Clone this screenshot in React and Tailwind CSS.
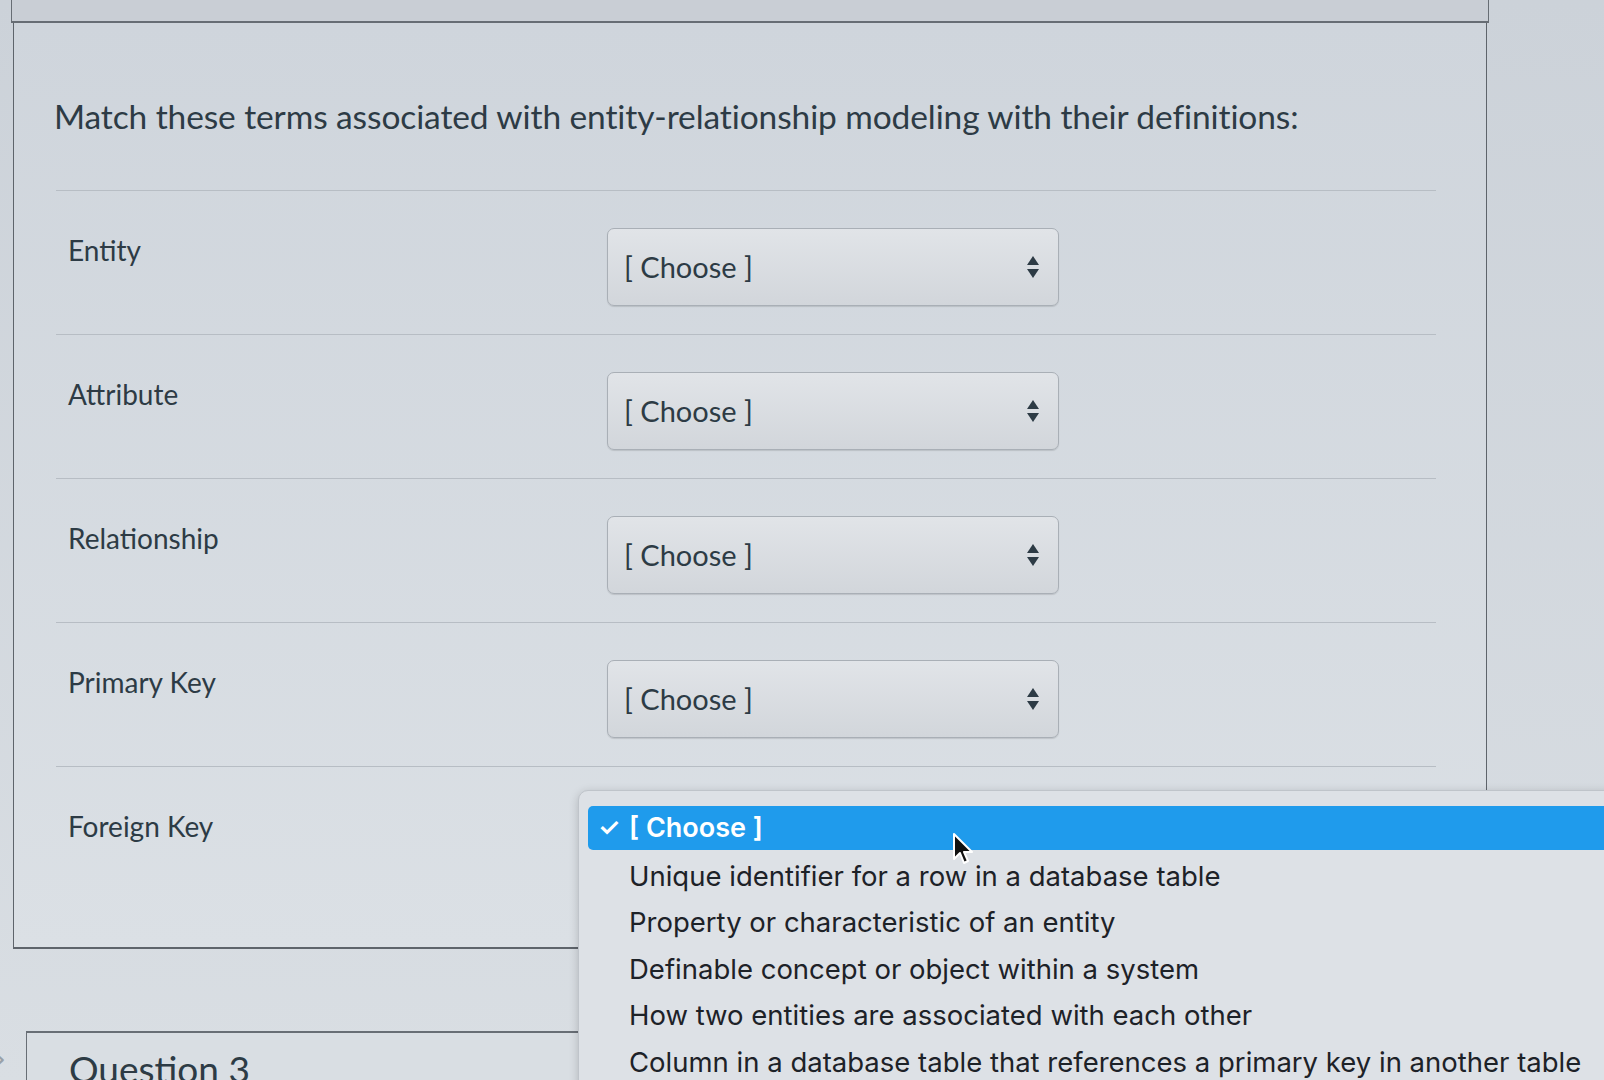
import React from 'react';

const TERMS = ['Entity', 'Attribute', 'Relationship', 'Primary Key', 'Foreign Key'];

const OPTIONS = [
  'Unique identifier for a row in a database table',
  'Property or characteristic of an entity',
  'Definable concept or object within a system',
  'How two entities are associated with each other',
  'Column in a database table that references a primary key in another table',
];

function Arrows() {
  return (
    <svg width="14" height="26" viewBox="0 0 14 26" className="shrink-0">
      <path d="M7 2 L13 11 L1 11 Z" fill="#2d3b45" />
      <path d="M7 24 L13 15 L1 15 Z" fill="#2d3b45" />
    </svg>
  );
}

function FakeSelect({ open }) {
  return (
    <div
      className={
        'w-[452px] h-[78px] rounded-[7px] border border-[#a9afb6] bg-gradient-to-b from-[#e1e4e8] to-[#d2d6db] shadow-[0_1px_1px_rgba(0,0,0,0.12)] flex items-center justify-between pl-[16px] pr-[18px] ' +
        (open ? 'opacity-0' : '')
      }
    >
      <span className="text-[29px] text-[#2d3b45] font-['Lato',sans-serif]">[ Choose ]</span>
      <Arrows />
    </div>
  );
}

function Row({ term, last }) {
  return (
    <div className={'flex ' + (last ? 'h-[180px]' : 'h-[144px] border-b border-[#b7bdc4]')}>
      <div className="w-[551px] pt-[38px] pl-[12px] text-[28px] text-[#2d3b45] font-['Lato',sans-serif]">{term}</div>
      <div className="pt-[37px]">
        <FakeSelect open={last} />
      </div>
    </div>
  );
}

function Cursor() {
  return (
    <svg width="22" height="34" viewBox="0 0 22 34" className="absolute left-[952px] top-[832px]">
      <path d="M2 2 L2 27 L8 21 L12 31 L16 29 L12 20 L20 20 Z" fill="#111" stroke="#fff" strokeWidth="2" strokeLinejoin="round" />
    </svg>
  );
}

export default function App() {
  return (
    <div className="relative w-[1604px] h-[1080px] overflow-hidden bg-gradient-to-b from-[#ccd2d9] to-[#d9dee3] font-['Lato',sans-serif]">
      {/* previous question's bottom */}
      <div className="ml-[11px] w-[1478px] h-[23px] bg-[#c9ced5] border-x border-b-2 border-[#676d74]" />

      {/* question card */}
      <div className="ml-[13px] w-[1474px] border-x border-b-2 border-[#5e646b] bg-gradient-to-b from-[#cfd5dc] to-[#dbe0e5]">
        <div className="pl-[40px] pt-[68px] h-[167px] text-[33.5px] text-[#2d3b45] tracking-[-0.1px] whitespace-nowrap">
          Match these terms associated with entity-relationship modeling with their definitions:
        </div>
        <div className="ml-[42px] mr-[50px] border-t border-[#b7bdc4]">
          {TERMS.map((t, i) => (
            <Row key={t} term={t} last={i === TERMS.length - 1} />
          ))}
        </div>
      </div>

      {/* next question */}
      <div className="ml-[26px] mt-[82px] w-[1470px] h-[200px] border-l border-t-2 border-[#686e75] bg-[#d9dee3]">
        <div className="pl-[42px] pt-[8px] text-[37px] text-[#2d3b45]">Question 3</div>
      </div>

      {/* left edge chevron */}
      <div className="absolute left-[-6px] top-[1036px] text-[#9aa1a8] text-[30px] font-['DejaVu_Sans',sans-serif]">›</div>

      {/* open native dropdown menu */}
      <div className="absolute left-[578px] top-[790px] w-[1100px] h-[320px] rounded-tl-[10px] bg-[#dde1e6] border border-[#bfc4ca] shadow-[0_2px_10px_rgba(0,0,0,0.18)] font-['Inter',sans-serif] pt-[15px]">
        <div className="ml-[9px] h-[44px] rounded-l-[5px] bg-[#1f9bec] flex items-center text-white text-[27px] font-semibold">
          <span className="w-[41px] pl-[10px] text-[25px]">✓</span>
          <span>[ Choose ]</span>
        </div>
        <div className="pl-[50px] pt-[3px] text-[27.5px] text-[#1d2228]">
          {OPTIONS.map((o) => (
            <div key={o} className="h-[46.5px] flex items-center whitespace-nowrap">{o}</div>
          ))}
        </div>
      </div>

      <Cursor />
    </div>
  );
}
